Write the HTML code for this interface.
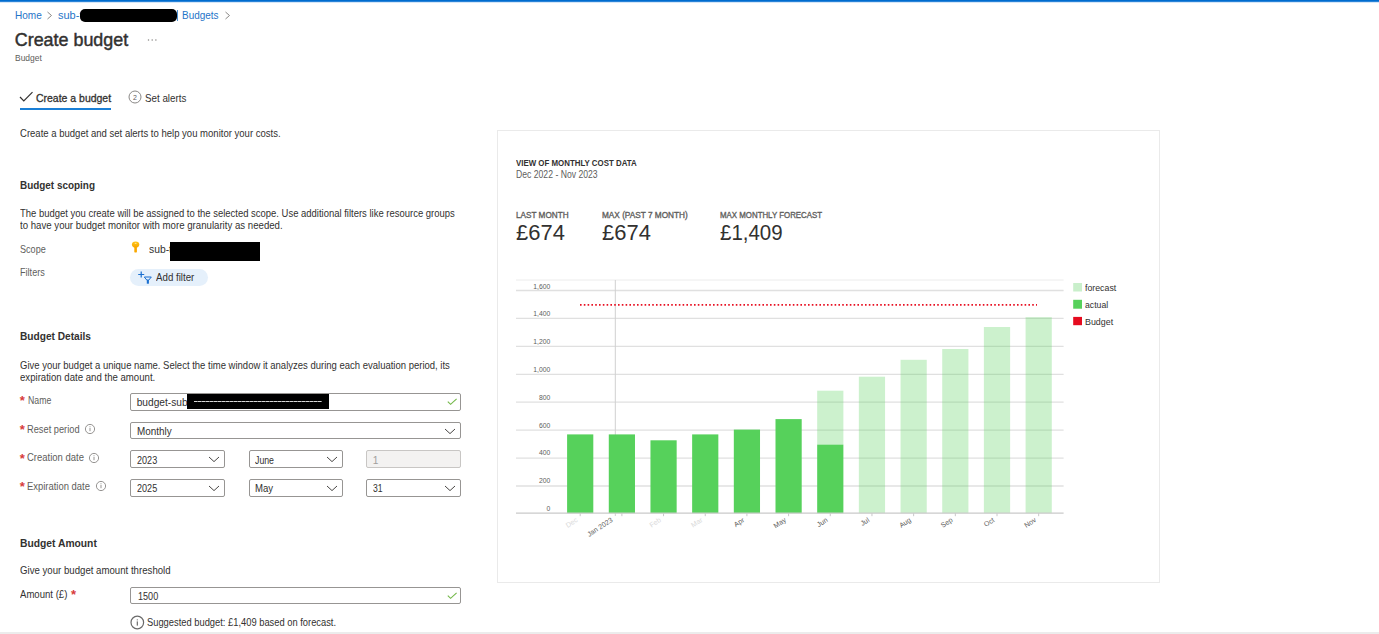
<!DOCTYPE html>
<html><head><meta charset="utf-8"><title>Create budget</title>
<style>
html,body{margin:0;padding:0;background:#fff;width:1379px;height:634px;overflow:hidden;position:relative;font-family:"Liberation Sans",sans-serif;}
.t{position:absolute;white-space:nowrap;line-height:0;}
svg text{font-family:"Liberation Sans",sans-serif;}
</style></head><body>
<div style="position:absolute;left:0px;top:0px;width:1379px;height:1px;background:#006cce"></div>
<div style="position:absolute;left:0px;top:1px;width:1379px;height:1px;background:#2a84d8"></div>
<div style="position:absolute;left:0px;top:2px;width:1379px;height:1px;background:#d5e6f7"></div>
<div class="t" style="left:14.80px;top:15.97px;font-size:10.2px;color:#1f74c8;transform:scale(0.9850,1.0);transform-origin:0 3.53px;">Home</div>
<svg style="position:absolute;left:46px;top:11px" width="8" height="9"><polyline points="1.5,1 5.5,4.5 1.5,8" fill="none" stroke="#8a8886" stroke-width="1"/></svg>
<div class="t" style="left:57.70px;top:15.97px;font-size:10.2px;color:#1f74c8;transform:scale(1.0804,1.0);transform-origin:0 3.53px;">sub-t</div>
<div style="position:absolute;left:79.5px;top:8.5px;width:97.5px;height:13.5px;background:#000;border-radius:5px"></div>
<div style="position:absolute;left:177px;top:10px;width:1px;height:11px;background:#1f74c8;opacity:.8"></div>
<div class="t" style="left:182.00px;top:15.97px;font-size:10.2px;color:#1f74c8;transform:scale(0.9778,1.0);transform-origin:0 3.53px;">Budgets</div>
<svg style="position:absolute;left:224px;top:11px" width="8" height="9"><polyline points="1.5,1 5.5,4.5 1.5,8" fill="none" stroke="#8a8886" stroke-width="1"/></svg>
<div class="t" style="left:14.80px;top:40.20px;font-size:17.9px;color:#323130;-webkit-text-stroke:0.45px #323130;">Create budget</div>
<svg style="position:absolute;left:147px;top:38px" width="11" height="4"><circle cx="1.5" cy="2" r="0.75" fill="#8a8886"/><circle cx="5.2" cy="2" r="0.75" fill="#8a8886"/><circle cx="8.9" cy="2" r="0.75" fill="#8a8886"/></svg>
<div class="t" style="left:14.80px;top:57.98px;font-size:9.0px;color:#605e5c;transform:scale(0.9395,1.0);transform-origin:0 3.12px;">Budget</div>
<svg style="position:absolute;left:19px;top:91px" width="15" height="12"><polyline points="1,6 4.8,10 13.5,1.2" fill="none" stroke="#323130" stroke-width="1.2"/></svg>
<div class="t" style="left:36.20px;top:97.99px;font-size:11px;color:#323130;transform:scale(0.9519,1.0);transform-origin:0 3.81px;-webkit-text-stroke:0.3px #323130;">Create a budget</div>
<div style="position:absolute;left:20px;top:108.3px;width:91.3px;height:2px;background:#1a7fd6"></div>
<svg style="position:absolute;left:128px;top:89.5px" width="14" height="14"><circle cx="7" cy="7" r="6" fill="none" stroke="#8a8886" stroke-width="1"/><text x="7" y="9.6" font-family="Liberation Sans" font-size="7" text-anchor="middle" fill="#605e5c">2</text></svg>
<div class="t" style="left:144.70px;top:98.97px;font-size:10.2px;color:#323130;transform:scale(0.9608,1.0);transform-origin:0 3.53px;">Set alerts</div>
<div class="t" style="left:20.00px;top:133.97px;font-size:10.2px;color:#323130;transform:scale(0.9353,1.0);transform-origin:0 3.53px;">Create a budget and set alerts to help you monitor your costs.</div>
<div class="t" style="left:20.00px;top:185.93px;font-size:10.3px;color:#323130;font-weight:700;transform:scale(0.9638,1.0);transform-origin:0 3.57px;">Budget scoping</div>
<div class="t" style="left:20.00px;top:213.87px;font-size:10.2px;color:#323130;transform:scale(0.9294,1.0);transform-origin:0 3.53px;">The budget you create will be assigned to the selected scope. Use additional filters like resource groups</div>
<div class="t" style="left:20.00px;top:225.97px;font-size:10.2px;color:#323130;transform:scale(0.9466,1.0);transform-origin:0 3.53px;">to have your budget monitor with more granularity as needed.</div>
<div class="t" style="left:20.00px;top:249.97px;font-size:10.2px;color:#605e5c;transform:scale(0.8920,1.0);transform-origin:0 3.53px;">Scope</div>
<svg style="position:absolute;left:131px;top:241px" width="10" height="13"><defs><linearGradient id="kg" x1="0" y1="0" x2="0" y2="1"><stop offset="0" stop-color="#ffc61a"/><stop offset="1" stop-color="#f7a600"/></linearGradient></defs><ellipse cx="4.6" cy="3.5" rx="3.7" ry="3.1" fill="url(#kg)"/><rect x="3.3" y="5" width="2.6" height="6.6" rx="1.2" fill="#f9a800"/><ellipse cx="4.6" cy="2.4" rx="1" ry="0.7" fill="#ffe38a"/></svg>
<div class="t" style="left:148.60px;top:249.97px;font-size:10.2px;color:#323130;transform:scale(1.0143,1.0);transform-origin:0 3.53px;">sub-t</div>
<div style="position:absolute;left:169.8px;top:241.7px;width:90.2px;height:19px;background:#000"></div>
<div class="t" style="left:20.00px;top:273.27px;font-size:10.2px;color:#605e5c;transform:scale(0.8931,1.0);transform-origin:0 3.53px;">Filters</div>
<div style="position:absolute;left:130.2px;top:268.8px;width:78px;height:17.4px;background:#e5f0fb;border-radius:9px"></div>
<svg style="position:absolute;left:137px;top:270px" width="16" height="16"><path d="M1.2 4.5h6M4.2 1.5v6" stroke="#1a6fd0" stroke-width="1.2" fill="none"/><path d="M7.3 7h7l-2.6 3.2h-1.8z" stroke="#1a6fd0" stroke-width="1.0" fill="none" stroke-linejoin="round"/><rect x="9.8" y="9.8" width="2.1" height="3.9" fill="#1a6fd0"/></svg>
<div class="t" style="left:155.60px;top:278.47px;font-size:10.2px;color:#323130;transform:scale(0.9540,1.0);transform-origin:0 3.53px;">Add filter</div>
<div class="t" style="left:20.00px;top:337.13px;font-size:10.3px;color:#323130;font-weight:700;transform:scale(0.9846,1.0);transform-origin:0 3.57px;">Budget Details</div>
<div class="t" style="left:20.00px;top:365.77px;font-size:10.2px;color:#323130;transform:scale(0.9325,1.0);transform-origin:0 3.53px;">Give your budget a unique name. Select the time window it analyzes during each evaluation period, its</div>
<div class="t" style="left:20.00px;top:377.77px;font-size:10.2px;color:#323130;transform:scale(0.9438,1.0);transform-origin:0 3.53px;">expiration date and the amount.</div>
<div class="t" style="left:19.70px;top:401.10px;font-size:13px;color:#d83b3b;font-weight:700;">*</div>
<div class="t" style="left:27.80px;top:400.57px;font-size:10.2px;color:#605e5c;transform:scale(0.8563,1.0);transform-origin:0 3.53px;">Name</div>
<div style="position:absolute;left:130.4px;top:393px;width:330.3px;height:17.8px;background:#fff;border:1px solid #979593;border-radius:2px;box-sizing:border-box"></div>
<div class="t" style="left:136.70px;top:402.77px;font-size:10.2px;color:#323130;">budget-sub</div>
<div style="position:absolute;left:187.4px;top:393.6px;width:141.5px;height:15.6px;background:#000"></div>
<div style="position:absolute;left:194.4px;top:400.5px;width:127.6px;height:1px;background:repeating-linear-gradient(90deg,#d8d8d8 0 3px,#888 3px 4px)"></div>
<svg style="position:absolute;left:447px;top:398.3px" width="11" height="8"><polyline points="0.8,3.6 3.6,6.3 9.6,0.8" fill="none" stroke="#74b84a" stroke-width="1.15"/></svg>
<div class="t" style="left:19.70px;top:430.20px;font-size:13px;color:#d83b3b;font-weight:700;">*</div>
<div class="t" style="left:27.40px;top:429.67px;font-size:10.2px;color:#605e5c;transform:scale(0.9095,1.0);transform-origin:0 3.53px;">Reset period</div>
<svg style="position:absolute;left:83.8px;top:423.1px" width="12" height="12"><circle cx="6" cy="6" r="4.6" fill="none" stroke="#8a8886" stroke-width="0.9"/><rect x="5.55" y="5" width="0.9" height="3.2" fill="#8a8886"/><circle cx="6" cy="3.8" r="0.55" fill="#8a8886"/></svg>
<div style="position:absolute;left:130.4px;top:421.8px;width:330.3px;height:17.7px;background:#fff;border:1px solid #979593;border-radius:2px;box-sizing:border-box"></div>
<div class="t" style="left:136.90px;top:431.67px;font-size:10.2px;color:#323130;transform:scale(0.9716,1.0);transform-origin:0 3.53px;">Monthly</div>
<svg style="position:absolute;left:443.5px;top:427.5px" width="12" height="7"><polyline points="1,1 6,5.6 11,1" fill="none" stroke="#484644" stroke-width="1"/></svg>
<div class="t" style="left:19.70px;top:458.70px;font-size:13px;color:#d83b3b;font-weight:700;">*</div>
<div class="t" style="left:27.40px;top:458.17px;font-size:10.2px;color:#605e5c;transform:scale(0.9307,1.0);transform-origin:0 3.53px;">Creation date</div>
<svg style="position:absolute;left:88.2px;top:451.9px" width="12" height="12"><circle cx="6" cy="6" r="4.6" fill="none" stroke="#8a8886" stroke-width="0.9"/><rect x="5.55" y="5" width="0.9" height="3.2" fill="#8a8886"/><circle cx="6" cy="3.8" r="0.55" fill="#8a8886"/></svg>
<div style="position:absolute;left:130.4px;top:450.3px;width:94.5px;height:17.4px;background:#fff;border:1px solid #979593;border-radius:2px;box-sizing:border-box"></div>
<div class="t" style="left:136.90px;top:460.87px;font-size:10.2px;color:#323130;transform:scale(0.8902,1.0);transform-origin:0 3.53px;">2023</div>
<svg style="position:absolute;left:207.5px;top:456px" width="12" height="7"><polyline points="1,1 6,5.6 11,1" fill="none" stroke="#484644" stroke-width="1"/></svg>
<div style="position:absolute;left:248.5px;top:450.3px;width:94px;height:17.4px;background:#fff;border:1px solid #979593;border-radius:2px;box-sizing:border-box"></div>
<div class="t" style="left:254.80px;top:460.87px;font-size:10.2px;color:#323130;transform:scale(0.8590,1.0);transform-origin:0 3.53px;">June</div>
<svg style="position:absolute;left:325.5px;top:456px" width="12" height="7"><polyline points="1,1 6,5.6 11,1" fill="none" stroke="#484644" stroke-width="1"/></svg>
<div style="position:absolute;left:366.2px;top:450.3px;width:94.5px;height:17.4px;background:#f3f2f1;border:1px solid #c8c6c4;border-radius:2px;box-sizing:border-box"></div>
<div class="t" style="left:372.80px;top:460.87px;font-size:10.2px;color:#a19f9d;">1</div>
<div class="t" style="left:19.70px;top:487.20px;font-size:13px;color:#d83b3b;font-weight:700;">*</div>
<div class="t" style="left:27.40px;top:486.67px;font-size:10.2px;color:#605e5c;transform:scale(0.9259,1.0);transform-origin:0 3.53px;">Expiration date</div>
<svg style="position:absolute;left:94.6px;top:480.4px" width="12" height="12"><circle cx="6" cy="6" r="4.6" fill="none" stroke="#8a8886" stroke-width="0.9"/><rect x="5.55" y="5" width="0.9" height="3.2" fill="#8a8886"/><circle cx="6" cy="3.8" r="0.55" fill="#8a8886"/></svg>
<div style="position:absolute;left:130.4px;top:479.2px;width:94.5px;height:17.4px;background:#fff;border:1px solid #979593;border-radius:2px;box-sizing:border-box"></div>
<div class="t" style="left:136.90px;top:489.27px;font-size:10.2px;color:#323130;transform:scale(0.8902,1.0);transform-origin:0 3.53px;">2025</div>
<svg style="position:absolute;left:207.5px;top:485px" width="12" height="7"><polyline points="1,1 6,5.6 11,1" fill="none" stroke="#484644" stroke-width="1"/></svg>
<div style="position:absolute;left:248.5px;top:479.2px;width:94px;height:17.4px;background:#fff;border:1px solid #979593;border-radius:2px;box-sizing:border-box"></div>
<div class="t" style="left:254.80px;top:489.27px;font-size:10.2px;color:#323130;transform:scale(0.9393,1.0);transform-origin:0 3.53px;">May</div>
<svg style="position:absolute;left:325.5px;top:485px" width="12" height="7"><polyline points="1,1 6,5.6 11,1" fill="none" stroke="#484644" stroke-width="1"/></svg>
<div style="position:absolute;left:366.2px;top:479.2px;width:94.5px;height:17.4px;background:#fff;border:1px solid #979593;border-radius:2px;box-sizing:border-box"></div>
<div class="t" style="left:372.80px;top:489.27px;font-size:10.2px;color:#323130;transform:scale(0.8461,1.0);transform-origin:0 3.53px;">31</div>
<svg style="position:absolute;left:443.5px;top:485px" width="12" height="7"><polyline points="1,1 6,5.6 11,1" fill="none" stroke="#484644" stroke-width="1"/></svg>
<div class="t" style="left:20.00px;top:543.53px;font-size:10.3px;color:#323130;font-weight:700;">Budget Amount</div>
<div class="t" style="left:20.00px;top:570.57px;font-size:10.2px;color:#323130;transform:scale(0.9464,1.0);transform-origin:0 3.53px;">Give your budget amount threshold</div>
<div class="t" style="left:20.00px;top:594.97px;font-size:10.2px;color:#323130;transform:scale(0.9395,1.0);transform-origin:0 3.53px;">Amount (£)</div>
<div class="t" style="left:71.10px;top:594.80px;font-size:13px;color:#d83b3b;font-weight:700;">*</div>
<div style="position:absolute;left:129.8px;top:586.9px;width:330.9px;height:17.2px;background:#fff;border:1px solid #979593;border-radius:2px;box-sizing:border-box"></div>
<div class="t" style="left:137.50px;top:596.87px;font-size:10.2px;color:#323130;transform:scale(0.8902,1.0);transform-origin:0 3.53px;">1500</div>
<svg style="position:absolute;left:447px;top:592px" width="11" height="8"><polyline points="0.8,3.6 3.6,6.3 9.6,0.8" fill="none" stroke="#74b84a" stroke-width="1.15"/></svg>
<svg style="position:absolute;left:129.5px;top:614.5px" width="15" height="15"><circle cx="7.3" cy="7.5" r="6.3" fill="none" stroke="#6a6a6a" stroke-width="1.2"/><rect x="6.7" y="6.4" width="1.3" height="4.2" fill="#777"/><rect x="6.7" y="4.3" width="1.3" height="1.1" fill="#888"/></svg>
<div class="t" style="left:147.40px;top:623.47px;font-size:10.2px;color:#323130;transform:scale(0.9170,1.0);transform-origin:0 3.53px;">Suggested budget: £1,409 based on forecast.</div>
<div style="position:absolute;left:0px;top:632px;width:1379px;height:2px;background:#ececec"></div>
<div style="position:absolute;left:497px;top:129.6px;width:662.5px;height:453px;border:1px solid #eaeaea;box-sizing:border-box;background:#fff"></div>
<div class="t" style="left:516.00px;top:163.05px;font-size:8.5px;color:#323130;font-weight:700;transform:scale(0.9283,1.0);transform-origin:0 2.95px;">VIEW OF MONTHLY COST DATA</div>
<div class="t" style="left:516.00px;top:174.70px;font-size:10.4px;color:#605e5c;transform:scale(0.8313,1.0);transform-origin:0 3.60px;">Dec 2022 - Nov 2023</div>
<div class="t" style="left:516.00px;top:215.18px;font-size:9.0px;color:#605e5c;transform:scale(0.9094,1.0);transform-origin:0 3.12px;-webkit-text-stroke:0.35px #605e5c;">LAST MONTH</div>
<div class="t" style="left:516.00px;top:232.95px;font-size:21.8px;color:#323130;transform:scale(1.0083,1.0);transform-origin:0 7.55px;">£674</div>
<div class="t" style="left:601.80px;top:215.18px;font-size:9.0px;color:#605e5c;transform:scale(0.9148,1.0);transform-origin:0 3.12px;-webkit-text-stroke:0.35px #605e5c;">MAX (PAST 7 MONTH)</div>
<div class="t" style="left:601.80px;top:232.95px;font-size:21.8px;color:#323130;transform:scale(1.0083,1.0);transform-origin:0 7.55px;">£674</div>
<div class="t" style="left:720.20px;top:215.18px;font-size:9.0px;color:#605e5c;transform:scale(0.8750,1.0);transform-origin:0 3.12px;-webkit-text-stroke:0.35px #605e5c;">MAX MONTHLY FORECAST</div>
<div class="t" style="left:720.20px;top:233.25px;font-size:21.5px;color:#323130;transform:scale(0.9519,1.0);transform-origin:0 7.45px;">£1,409</div>
<svg style="position:absolute;left:0;top:0" width="1379" height="634">
<line x1="516" y1="280" x2="1063.6" y2="280" stroke="#ececec" stroke-width="1"/>
<line x1="516" y1="486.00" x2="1063.6" y2="486.00" stroke="#e0e0e0" stroke-width="1.3"/>
<line x1="516" y1="458.07" x2="1063.6" y2="458.07" stroke="#e0e0e0" stroke-width="1.3"/>
<line x1="516" y1="430.14" x2="1063.6" y2="430.14" stroke="#e0e0e0" stroke-width="1.3"/>
<line x1="516" y1="402.21" x2="1063.6" y2="402.21" stroke="#e0e0e0" stroke-width="1.3"/>
<line x1="516" y1="374.28" x2="1063.6" y2="374.28" stroke="#e0e0e0" stroke-width="1.3"/>
<line x1="516" y1="346.35" x2="1063.6" y2="346.35" stroke="#e0e0e0" stroke-width="1.3"/>
<line x1="516" y1="318.42" x2="1063.6" y2="318.42" stroke="#e0e0e0" stroke-width="1.3"/>
<line x1="516" y1="290.49" x2="1063.6" y2="290.49" stroke="#e0e0e0" stroke-width="1.3"/>
<line x1="615.3" y1="280" x2="615.3" y2="516" stroke="#d0d0d0" stroke-width="1"/>
<rect x="567.10" y="434.40" width="26.2" height="78.80" fill="#56d15b"/>
<rect x="608.78" y="434.40" width="26.2" height="78.80" fill="#56d15b"/>
<rect x="650.46" y="440.30" width="26.2" height="72.90" fill="#56d15b"/>
<rect x="692.14" y="434.40" width="26.2" height="78.80" fill="#56d15b"/>
<rect x="733.82" y="429.60" width="26.2" height="83.60" fill="#56d15b"/>
<rect x="775.50" y="419.10" width="26.2" height="94.10" fill="#56d15b"/>
<rect x="817.18" y="444.60" width="26.2" height="68.60" fill="#56d15b"/>
<rect x="817.18" y="390.70" width="26.2" height="53.90" fill="#56d15b" fill-opacity="0.3"/>
<rect x="858.86" y="376.70" width="26.2" height="136.50" fill="#56d15b" fill-opacity="0.3"/>
<rect x="900.54" y="359.80" width="26.2" height="153.40" fill="#56d15b" fill-opacity="0.3"/>
<rect x="942.22" y="349.00" width="26.2" height="164.20" fill="#56d15b" fill-opacity="0.3"/>
<rect x="983.90" y="327.00" width="26.2" height="186.20" fill="#56d15b" fill-opacity="0.3"/>
<rect x="1025.58" y="317.20" width="26.2" height="196.00" fill="#56d15b" fill-opacity="0.3"/>
<line x1="516" y1="513.20" x2="1063.6" y2="513.20" stroke="#cacaca" stroke-width="1.3"/>
<line x1="580.20" y1="513.20" x2="580.20" y2="516.20" stroke="#c8c8c8" stroke-width="1"/>
<line x1="621.88" y1="513.20" x2="621.88" y2="516.20" stroke="#c8c8c8" stroke-width="1"/>
<line x1="663.56" y1="513.20" x2="663.56" y2="516.20" stroke="#c8c8c8" stroke-width="1"/>
<line x1="705.24" y1="513.20" x2="705.24" y2="516.20" stroke="#c8c8c8" stroke-width="1"/>
<line x1="746.92" y1="513.20" x2="746.92" y2="516.20" stroke="#c8c8c8" stroke-width="1"/>
<line x1="788.60" y1="513.20" x2="788.60" y2="516.20" stroke="#c8c8c8" stroke-width="1"/>
<line x1="830.28" y1="513.20" x2="830.28" y2="516.20" stroke="#c8c8c8" stroke-width="1"/>
<line x1="871.96" y1="513.20" x2="871.96" y2="516.20" stroke="#c8c8c8" stroke-width="1"/>
<line x1="913.64" y1="513.20" x2="913.64" y2="516.20" stroke="#c8c8c8" stroke-width="1"/>
<line x1="955.32" y1="513.20" x2="955.32" y2="516.20" stroke="#c8c8c8" stroke-width="1"/>
<line x1="997.00" y1="513.20" x2="997.00" y2="516.20" stroke="#c8c8c8" stroke-width="1"/>
<line x1="1038.68" y1="513.20" x2="1038.68" y2="516.20" stroke="#c8c8c8" stroke-width="1"/>
<line x1="580" y1="304.9" x2="1037" y2="304.9" stroke="#e81123" stroke-width="1.6" stroke-dasharray="1.6 2.2"/>
<text x="550.3" y="511.00" font-family="Liberation Sans" font-size="6.8" text-anchor="end" fill="#605e5c">0</text>
<text x="550.3" y="483.21" font-family="Liberation Sans" font-size="6.8" text-anchor="end" fill="#605e5c">200</text>
<text x="550.3" y="455.42" font-family="Liberation Sans" font-size="6.8" text-anchor="end" fill="#605e5c">400</text>
<text x="550.3" y="427.63" font-family="Liberation Sans" font-size="6.8" text-anchor="end" fill="#605e5c">600</text>
<text x="550.3" y="399.84" font-family="Liberation Sans" font-size="6.8" text-anchor="end" fill="#605e5c">800</text>
<text x="550.3" y="372.05" font-family="Liberation Sans" font-size="6.8" text-anchor="end" fill="#605e5c">1,000</text>
<text x="550.3" y="344.26" font-family="Liberation Sans" font-size="6.8" text-anchor="end" fill="#605e5c">1,200</text>
<text x="550.3" y="316.47" font-family="Liberation Sans" font-size="6.8" text-anchor="end" fill="#605e5c">1,400</text>
<text x="550.3" y="288.68" font-family="Liberation Sans" font-size="6.8" text-anchor="end" fill="#605e5c">1,600</text>
<text x="578.20" y="521.20" font-family="Liberation Sans" font-size="7" text-anchor="end" fill="#d9d9d9" transform="rotate(-33 578.20 521.20)">Dec</text>
<text x="613.30" y="521.20" font-family="Liberation Sans" font-size="7" text-anchor="end" fill="#605e5c" transform="rotate(-33 613.30 521.20)">Jan 2023</text>
<text x="661.56" y="521.20" font-family="Liberation Sans" font-size="7" text-anchor="end" fill="#d9d9d9" transform="rotate(-33 661.56 521.20)">Feb</text>
<text x="703.24" y="521.20" font-family="Liberation Sans" font-size="7" text-anchor="end" fill="#d9d9d9" transform="rotate(-33 703.24 521.20)">Mar</text>
<text x="744.92" y="521.20" font-family="Liberation Sans" font-size="7" text-anchor="end" fill="#605e5c" transform="rotate(-33 744.92 521.20)">Apr</text>
<text x="786.60" y="521.20" font-family="Liberation Sans" font-size="7" text-anchor="end" fill="#605e5c" transform="rotate(-33 786.60 521.20)">May</text>
<text x="828.28" y="521.20" font-family="Liberation Sans" font-size="7" text-anchor="end" fill="#605e5c" transform="rotate(-33 828.28 521.20)">Jun</text>
<text x="869.96" y="521.20" font-family="Liberation Sans" font-size="7" text-anchor="end" fill="#605e5c" transform="rotate(-33 869.96 521.20)">Jul</text>
<text x="911.64" y="521.20" font-family="Liberation Sans" font-size="7" text-anchor="end" fill="#605e5c" transform="rotate(-33 911.64 521.20)">Aug</text>
<text x="953.32" y="521.20" font-family="Liberation Sans" font-size="7" text-anchor="end" fill="#605e5c" transform="rotate(-33 953.32 521.20)">Sep</text>
<text x="995.00" y="521.20" font-family="Liberation Sans" font-size="7" text-anchor="end" fill="#605e5c" transform="rotate(-33 995.00 521.20)">Oct</text>
<text x="1036.68" y="521.20" font-family="Liberation Sans" font-size="7" text-anchor="end" fill="#605e5c" transform="rotate(-33 1036.68 521.20)">Nov</text>
<rect x="1073.2" y="283" width="8.8" height="8.5" fill="#c9efcb"/>
<rect x="1073.2" y="299.8" width="8.8" height="8.9" fill="#56d15b"/>
<rect x="1073.2" y="316.9" width="8.8" height="8.3" fill="#e50b1f"/>
</svg>
<div class="t" style="left:1084.70px;top:288.24px;font-size:9.4px;color:#323130;transform:scale(0.9361,1.0);transform-origin:0 3.26px;">forecast</div>
<div class="t" style="left:1084.70px;top:305.24px;font-size:9.4px;color:#323130;transform:scale(0.9249,1.0);transform-origin:0 3.26px;">actual</div>
<div class="t" style="left:1084.70px;top:322.24px;font-size:9.4px;color:#323130;transform:scale(0.9465,1.0);transform-origin:0 3.26px;">Budget</div>
</body></html>
